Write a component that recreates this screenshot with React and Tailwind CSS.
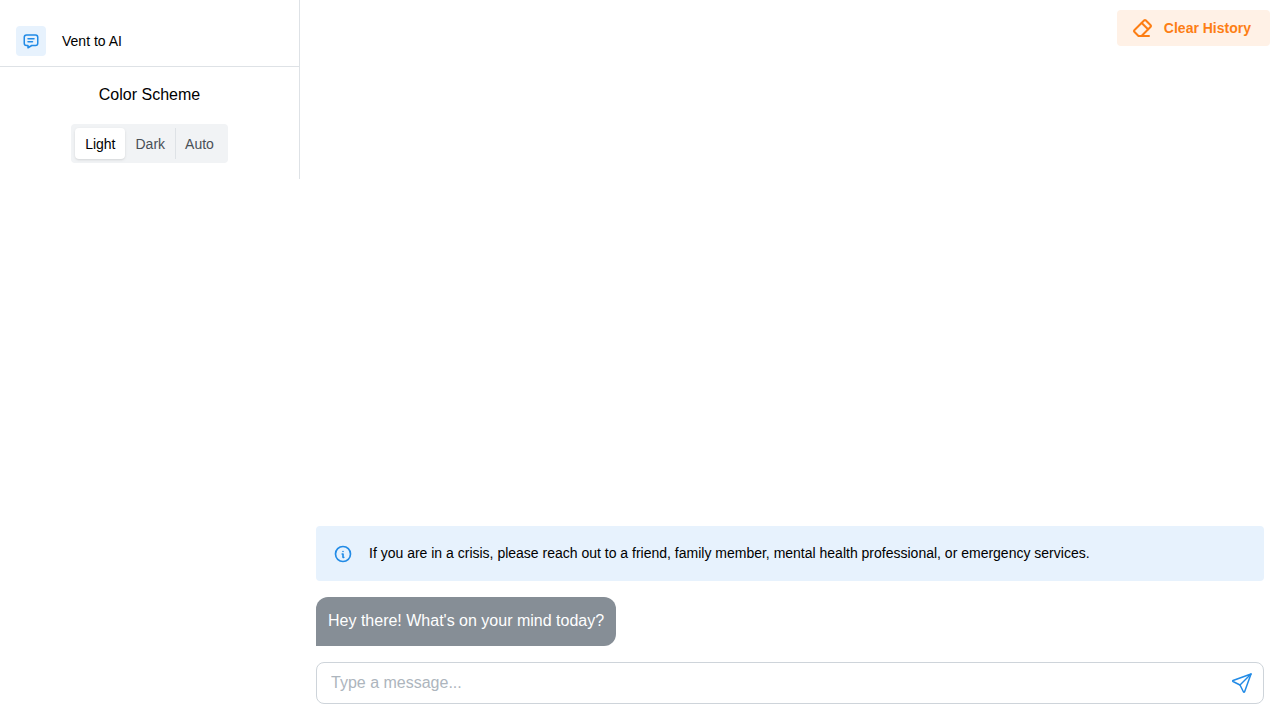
import { useState } from 'react'

const SCHEMES = [
  { id: 'light', label: 'Light' },
  { id: 'dark', label: 'Dark' },
  { id: 'auto', label: 'Auto' },
]

function Icon({ className, strokeWidth = 2, children }) {
  return (
    <svg
      viewBox="0 0 24 24" fill="none" stroke="currentColor" strokeWidth={strokeWidth}
      strokeLinecap="round" strokeLinejoin="round" aria-hidden="true"
      className={className}
    >
      {children}
    </svg>
  )
}

function Sidebar() {
  const [scheme, setScheme] = useState('light')

  return (
    <aside className="w-[300px] shrink-0 self-start border-r border-[#dee2e6] pb-4">
      {/* ── Navigation ── */}
      <nav className="border-b border-[#dee2e6] pt-4">
        <a href="#" className="flex items-center gap-4 px-4 py-[10px] text-sm leading-[18px] text-black">
          <span className="flex h-[30px] w-[30px] items-center justify-center rounded bg-[#e7f2fd] text-[#228be6]">
            <Icon className="h-[18px] w-[18px]">
              <path d="M8 9h8" />
              <path d="M8 13h6" />
              <path d="M18 4a3 3 0 0 1 3 3v8a3 3 0 0 1 -3 3h-5l-5 3v-3h-2a3 3 0 0 1 -3 -3v-8a3 3 0 0 1 3 -3h12z" />
            </Icon>
          </span>
          Vent to AI
        </a>
      </nav>

      {/* ── Color scheme ── */}
      <div className="flex flex-col items-center gap-[17px] pt-4">
        <h2 id="scheme-title" className="text-base text-black">Color Scheme</h2>
        <div role="radiogroup" aria-labelledby="scheme-title" className="flex rounded bg-[#f1f3f5] p-1">
          {SCHEMES.map((s) => (
            <label
              key={s.id}
              className={[
                'flex h-[31px] cursor-pointer items-center justify-center pr-[10px] text-sm',
                scheme === s.id ? 'rounded bg-white text-black shadow-sm' : 'text-[#495057]',
                s.id === 'auto' && scheme === 'light' ? 'border-l border-[#dee2e6] pl-[9px]' : 'pl-[10px]',
              ].join(' ')}
            >
              <input
                type="radio" name="scheme" value={s.id} className="sr-only"
                checked={scheme === s.id} onChange={() => setScheme(s.id)}
              />
              {s.label}
            </label>
          ))}
        </div>
      </div>
    </aside>
  )
}

export default function App() {
  const [message, setMessage] = useState('')

  return (
    <div className="flex min-h-screen bg-white font-['Liberation_Sans',Arial,sans-serif]">
      <Sidebar />

      <main className="flex min-w-0 flex-1 flex-col justify-between">
        <button
          type="button"
          className="m-[10px] flex h-9 items-center gap-[10px] self-end rounded bg-[#fff1e6] pl-[13px] pr-[19px] text-sm font-bold text-[#fd7e14]"
        >
          <Icon className="h-6 w-6">
            <path d="M19 20h-10.5l-4.21 -4.3a1 1 0 0 1 0 -1.41l10 -10a1 1 0 0 1 1.41 0l5 5a1 1 0 0 1 0 1.41l-9.2 9.3" />
            <path d="M18 13.3l-6.3 -6.3" />
          </Icon>
          Clear History
        </button>

        <div className="flex flex-col gap-4 p-4">
          <div role="alert" className="flex items-center gap-4 rounded bg-[#e7f2fd] p-4 pl-[17px] text-sm leading-[23px] text-black">
            <Icon className="h-5 w-5 shrink-0 text-[#228be6]">
              <circle cx="12" cy="12" r="9" />
              <path d="M12 9h.01" />
              <path d="M11 12h1v4h1" />
            </Icon>
            If you are in a crisis, please reach out to a friend, family member, mental health professional, or emergency services.
          </div>

          <p className="self-start rounded-xl rounded-bl-none bg-[#868e96] px-3 pt-3 pb-[13px] text-base leading-6 text-white">
            Hey there! What's on your mind today?
          </p>

          <form
            onSubmit={(e) => e.preventDefault()}
            className="flex h-[42px] items-center rounded-lg border border-[#ced4da] pl-[14px] pr-[7px]"
          >
            <input
              value={message} onChange={(e) => setMessage(e.target.value)}
              placeholder="Type a message..." aria-label="Message"
              className="min-w-0 flex-1 text-base text-black placeholder:text-[#adb5bd] focus:outline-none"
            />
            <button type="submit" aria-label="Send" className="flex h-7 w-7 items-center justify-center text-[#228be6]">
              <Icon className="h-6 w-6" strokeWidth={1.5}>
                <path d="M10 14l11 -11" />
                <path d="M21 3l-6.5 18a.55 .55 0 0 1 -1 0l-3.5 -7l-7 -3.5a.55 .55 0 0 1 0 -1l18 -6.5" />
              </Icon>
            </button>
          </form>
        </div>
      </main>
    </div>
  )
}
